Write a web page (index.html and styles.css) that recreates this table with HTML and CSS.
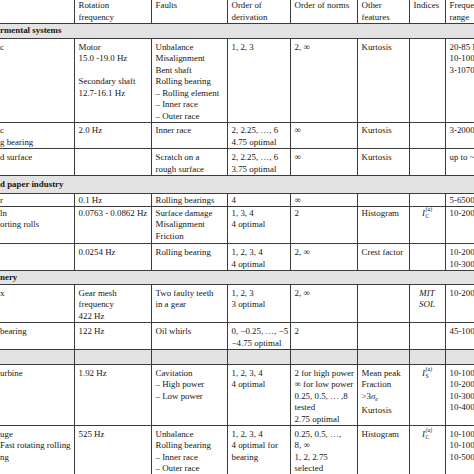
FILE: index.html
```html
<!DOCTYPE html>
<html lang="en">
<head>
<meta charset="utf-8">
<title>Table</title>
<link rel="stylesheet" href="styles.css">
</head>
<body>
<div class="clip">
<table class="tbl">
  <colgroup>
    <col class="w1"><col class="w2"><col class="w3"><col class="w4"><col class="w5"><col class="w6"><col class="w7"><col class="w8">
  </colgroup>
  <thead>
    <tr>
      <th class="c1"></th>
      <th>Rotation<br>frequency</th>
      <th>Faults</th>
      <th>Order of<br>derivation</th>
      <th>Order of norms</th>
      <th>Other<br>features</th>
      <th>Indices</th>
      <th class="c8">Frequency<br>range</th>
    </tr>
  </thead>
  <tbody>
    <tr class="sec s1"><td colspan="8" class="c1">rmental systems</td></tr>
    <tr class="ra">
      <td class="c1">c</td>
      <td>Motor<br>15.0 -19.0 Hz<br><br>Secondary shaft<br>12.7-16.1 Hz</td>
      <td>Unbalance<br>Misalignment<br>Bent shaft<br>Rolling bearing<br>– Rolling element<br>– Inner race<br>– Outer race</td>
      <td>1, 2, 3</td>
      <td>2, ∞</td>
      <td>Kurtosis</td>
      <td class="ix"></td>
      <td class="c8">20-85 Hz<br>10-1000 Hz<br>3-10700 Hz</td>
    </tr>
    <tr class="rb">
      <td class="c1">c<br>g bearing</td>
      <td>2.0 Hz</td>
      <td>Inner race</td>
      <td>2, 2.25, …, 6<br>4.75 optimal</td>
      <td>∞</td>
      <td>Kurtosis</td>
      <td class="ix"></td>
      <td class="c8">3-20000 Hz</td>
    </tr>
    <tr class="rc">
      <td class="c1">d surface</td>
      <td></td>
      <td>Scratch on a<br>rough surface</td>
      <td>2, 2.25, …, 6<br>3.75 optimal</td>
      <td>∞</td>
      <td>Kurtosis</td>
      <td class="ix"></td>
      <td class="c8">up to ~10 kHz</td>
    </tr>
    <tr class="sec s2"><td colspan="8" class="c1">d paper industry</td></tr>
    <tr class="rd">
      <td class="c1">r</td>
      <td>0.1 Hz</td>
      <td>Rolling bearings</td>
      <td>4</td>
      <td>∞</td>
      <td></td>
      <td class="ix"></td>
      <td class="c8">5-6500 Hz</td>
    </tr>
    <tr class="re">
      <td class="c1">ln<br>orting rolls</td>
      <td>0.0763 - 0.0862 Hz</td>
      <td>Surface damage<br>Misalignment<br>Friction</td>
      <td>1, 3, 4<br>4 optimal</td>
      <td>2</td>
      <td>Histogram</td>
      <td class="ix"><span class="idx"><i>I</i><span class="ss"><span class="sp"><i>(a)</i></span><span class="sb">C</span></span></span></td>
      <td class="c8">10-2000 Hz</td>
    </tr>
    <tr class="rf">
      <td class="c1"></td>
      <td>0.0254 Hz</td>
      <td>Rolling bearing</td>
      <td>1, 2, 3, 4<br>4 optimal</td>
      <td>2, ∞</td>
      <td>Crest factor</td>
      <td class="ix"></td>
      <td class="c8">10-2000 Hz<br>10-3000 Hz</td>
    </tr>
    <tr class="sec s3"><td colspan="8" class="c1">nery</td></tr>
    <tr class="rg">
      <td class="c1">x</td>
      <td>Gear mesh<br>frequency<br>422 Hz</td>
      <td>Two faulty teeth<br>in a gear</td>
      <td>1, 2, 3<br>3 optimal</td>
      <td>2, ∞</td>
      <td></td>
      <td class="ix"><i>MIT</i><br><i>SOL</i></td>
      <td class="c8">10-2000 Hz</td>
    </tr>
    <tr class="rh">
      <td class="c1">bearing</td>
      <td>122 Hz</td>
      <td>Oil whirls</td>
      <td>0, −0.25, …, −5<br>−4.75 optimal</td>
      <td>2</td>
      <td></td>
      <td class="ix"></td>
      <td class="c8">45-1000 Hz</td>
    </tr>
    <tr class="s4">
      <td class="c1"></td><td></td><td></td><td></td><td></td><td></td><td></td><td class="c8"></td>
    </tr>
    <tr class="ri">
      <td class="c1">urbine</td>
      <td>1.92 Hz</td>
      <td>Cavitation<br>– High power<br>– Low power</td>
      <td>1, 2, 3, 4<br>4 optimal</td>
      <td>2 for high power<br>∞ for low power<br>0.25, 0.5, … ,8<br>tested<br>2.75 optimal</td>
      <td>Mean peak<br>Fraction<br>&gt;3<i>σ</i><span class="sub"><i>e</i></span><br>Kurtosis</td>
      <td class="ix"><span class="idx"><i>I</i><span class="ss"><span class="sp"><i>(a)</i></span><span class="sb">S</span></span></span></td>
      <td class="c8">10-1000 Hz<br>10-2000 Hz<br>10-3000 Hz<br>10-4000 Hz</td>
    </tr>
    <tr class="rj">
      <td class="c1">uge<br>Fast rotating rolling<br>ng</td>
      <td>525 Hz</td>
      <td>Unbalance<br>Rolling bearing<br>– Inner race<br>– Outer race</td>
      <td>1, 2, 3, 4<br>4 optimal for<br>bearing</td>
      <td>0.25, 0.5, …,<br>8, ∞<br>1, 2, 2.75<br>selected</td>
      <td>Histogram</td>
      <td class="ix"><span class="idx"><i>I</i><span class="ss"><span class="sp"><i>(a)</i></span><span class="sb">C</span></span></span></td>
      <td class="c8">10-1000 Hz<br>10-1000 Hz<br>10-5000 Hz</td>
    </tr>
  </tbody>
</table>
</div>
</body>
</html>
```

FILE: styles.css
```css
html, body {
  margin: 0;
  padding: 0;
  background: #ffffff;
}

body {
  font-family: "Liberation Serif", "Times New Roman", serif;
  color: #161616;
}

.clip {
  width: 474px;
  height: 474px;
  overflow: hidden;
  background: #ffffff;
}

.tbl {
  border-collapse: collapse;
  table-layout: fixed;
  width: 525px;
  font-size: 8.9px;
  line-height: 11.5px;
}

.w1 { width: 74px; }
.w2 { width: 77px; }
.w3 { width: 76px; }
.w4 { width: 63px; }
.w5 { width: 67px; }
.w6 { width: 52px; }
.w7 { width: 36px; }
.w8 { width: 80px; }

.tbl th,
.tbl td {
  border: 1px solid #3c3c3c;
  padding: 2.5px 2px 0 4px;
  vertical-align: top;
  text-align: left;
  white-space: nowrap;
  overflow: hidden;
  font-weight: normal;
}

.tbl th {
  padding-top: 0;
  border-top: none;
}

.tbl .c1 {
  border-left: none;
  padding-left: 0;
}

.tbl .c8 {
  border-right: none;
}

.tbl .ix {
  text-align: center;
  padding-left: 1px;
  padding-right: 1px;
}

/* section rows */
.sec td {
  background: #e3e3e3;
  font-weight: bold;
}

.s1 td { padding-top: 1px; padding-bottom: 1.5px; }
.s2 td { padding-top: 3px; padding-bottom: 2.5px; }
.s3 td { padding-top: 1px; padding-bottom: 0.5px; }

.s4 td {
  background: #e3e3e3;
  height: 11.5px;
  padding-top: 1.5px;
  padding-bottom: 1px;
}

/* body rows */
.rb td { padding-top: 2px; }
.rc td { padding-top: 3px; }
.rd td { padding-top: 0.5px; padding-bottom: 0; }
.re td { padding-top: 0.5px; padding-bottom: 1px; }
.rf td { padding-top: 3px; }
.rh td { padding-top: 3px; }

/* index symbol I with stacked sub/superscript */
.idx {
  display: inline-flex;
  align-items: center;
  line-height: 11.5px;
}

.ss {
  display: inline-flex;
  flex-direction: column;
  font-size: 5.6px;
  line-height: 5.6px;
  margin-left: 0.6px;
  text-align: left;
}

.sp {
  position: relative;
  top: -1px;
}

.sb {
  position: relative;
  top: 0.5px;
}

.sub {
  font-size: 6px;
  vertical-align: -1.5px;
}
```
